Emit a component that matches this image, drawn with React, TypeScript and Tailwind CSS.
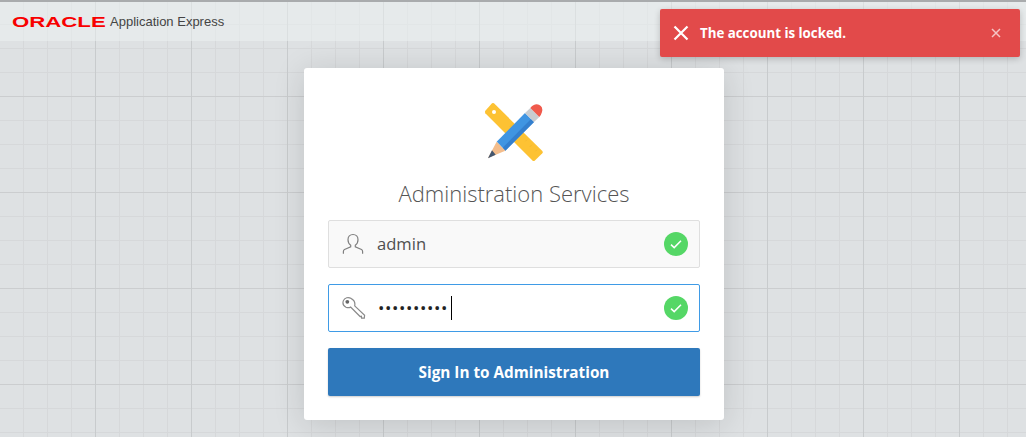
const font = "font-['Open_Sans',sans-serif]";

const CheckBadge = () => (
  <svg width="24" height="24" viewBox="0 0 24 24" className="shrink-0">
    <circle cx="12" cy="12" r="12" fill="#55d766" />
    <path d="M7 12.6l3.2 3L17 8.8" fill="none" stroke="#fff" strokeWidth="1.5" />
  </svg>
);

const UserIcon = () => (
  <svg width="22" height="22" viewBox="0 0 22 22" fill="none" stroke="#808080" strokeWidth="1.2" className="shrink-0">
    <path d="M11 1.500c-3 0-5 2.200-5 5.200 0 2.400 1.100 4.400 2.700 5.600v1.600L2.500 16.500c-.8.400-1.100 1-1.100 1.900v2.300" />
    <path d="M11 1.500c3 0 5 2.200 5 5.200 0 2.400-1.100 4.400-2.700 5.600v1.600l6.200 2.600c.8.400 1.100 1 1.100 1.900v2.300" />
  </svg>
);

const KeyIcon = () => (
  <svg width="24" height="24" viewBox="0 0 24 24" fill="none" stroke="#8a8a8a" strokeWidth="1.200" className="shrink-0">
    <path d="M9.300 2.600C6.300.6 2.600 1.600 1.400 4.600.4 7.400 1.600 10 4 11.200c1.600.7 3.200.6 4.600-.1l9.500 9.400 1.300-.2.200 1.800 2.700.1.300-2.900-9.900-9.400c.6-3-.7-5.900-3.400-7.300z" />
    <circle cx="5.300" cy="5.800" r="1.900" fill="#666666" stroke="none" />
  </svg>
);

const AppIcon = () => (
  <svg width="88" height="80" viewBox="0 0 264 240" className="block">
    <path d="M72 40 L217 183 Q220 187 217 190 L194 212 Q191 214 188 212 L46 70 Q44 65 46 62 L66 40 Q69 38 72 40Z" fill="#fdc233" />
    <circle cx="72" cy="66" r="6" fill="#fff" />
    <path d="M126 104l-7 7M141 119l-5 5M171 149l-5 5M186 164l-7 7M201 179l-5 5" stroke="#f0b52e" strokeWidth="2" />
    <path d="M80 155 L165 69 L192 96 L106 182Z" fill="#4095e2" />
    <path d="M98 173 L183 87 L192 96 L106 182Z" fill="#347fce" />
    <path d="M80 155 L106 182 L54 204Z" fill="#f3bd8c" />
    <path d="M66 181 L77 194 L54 205Z" fill="#45576e" />
    <path d="M165 69 L181 54 L208 81 L192 96Z" fill="#c8ccd0" />
    <path d="M181 54 Q192 40 207 44 Q220 50 216 66 Q214 74 208 81Z" fill="#f05a4c" />
  </svg>
);

const App = () => {
  return (
    <div
      className={`relative h-[437px] w-full overflow-hidden bg-[#dee1e3] bg-[linear-gradient(to_right,#c8cbcd_1px,transparent_1px),linear-gradient(to_bottom,#cbcdcf_1px,transparent_1px),linear-gradient(to_right,#d6d8da_1px,transparent_1px),linear-gradient(to_bottom,#d6d8da_1px,transparent_1px)] bg-[size:96px_96px,96px_96px,24px_24px,24px_24px] bg-[position:95px_0,0_0,23px_0,0_0] ${font}`}
    >
      <header className="flex h-[41px] items-center border-t-2 border-[#a9abad] bg-[rgba(238,243,243,0.5)] pl-3">
        <span className="inline-block w-[98px] origin-left scale-x-[1.48] font-['Liberation_Sans',sans-serif] text-[15px] leading-none font-bold text-[#f80000]">
          ORACLE
        </span>
        <span className="font-['Liberation_Sans',sans-serif] text-[13px] text-[#444444]">Application Express</span>
      </header>

      <div className="absolute top-[9px] right-[6px] flex h-12 w-[360px] items-center rounded-[2px] bg-[#e24a4a] pr-[19px] pl-[13px] text-white shadow-[0_2px_6px_rgba(0,0,0,0.2)]">
        <svg width="16" height="16" viewBox="0 0 16 16" stroke="#fff" strokeWidth="2.200" className="shrink-0">
          <path d="M1.500 1.500l13 13M14.500 1.500l-13 13" />
        </svg>
        <p className="mt-[1px] ml-[11px] flex-1 text-[13.300px] font-bold">The account is locked.</p>
        <svg width="10" height="10" viewBox="0 0 10 10" stroke="#f5c4c4" strokeWidth="1.500" className="shrink-0">
          <path d="M1 1l8 8M9 1l-8 8" />
        </svg>
      </div>

      <main className="mt-[27px] flex justify-center pl-[2px]">
        <div className="flex h-[352px] w-[420px] flex-col items-center rounded-[3px] bg-white px-6 pt-[22px] shadow-[0_4px_32px_rgba(0,0,0,0.14)]">
          <AppIcon />
          <h1 className="mt-[5px] text-[22px] leading-[36px] font-light text-[#555555]">Administration Services</h1>
          <div className="mt-[9px] flex h-12 w-full items-center rounded-[2px] border border-[#dfdfdf] bg-[#f9f9f9] pr-[11px] pl-[13px]">
            <UserIcon />
            <span className="ml-[13px] flex-1 text-[16.600px] text-[#505050]">admin</span>
            <CheckBadge />
          </div>
          <div className="mt-4 flex h-12 w-full items-center rounded-[2px] border border-[#3f9be6] bg-white pr-[11px] pl-[13px]">
            <KeyIcon />
            <span className="ml-[12px] flex flex-1 items-center text-[17px] text-[#222222]">
              <span className="tracking-[0.6px]">••••••••••</span>
              <span className="ml-[3px] h-6 w-[1.5px] bg-black" />
            </span>
            <CheckBadge />
          </div>
          <button
            type="button"
            className="mt-4 h-12 w-full rounded-[2px] bg-[#2e78bb] text-[15.300px] font-bold text-white shadow-[0_1px_2px_rgba(0,0,0,0.2)]"
          >
            Sign In to Administration
          </button>
        </div>
      </main>
    </div>
  );
};
export default App;
